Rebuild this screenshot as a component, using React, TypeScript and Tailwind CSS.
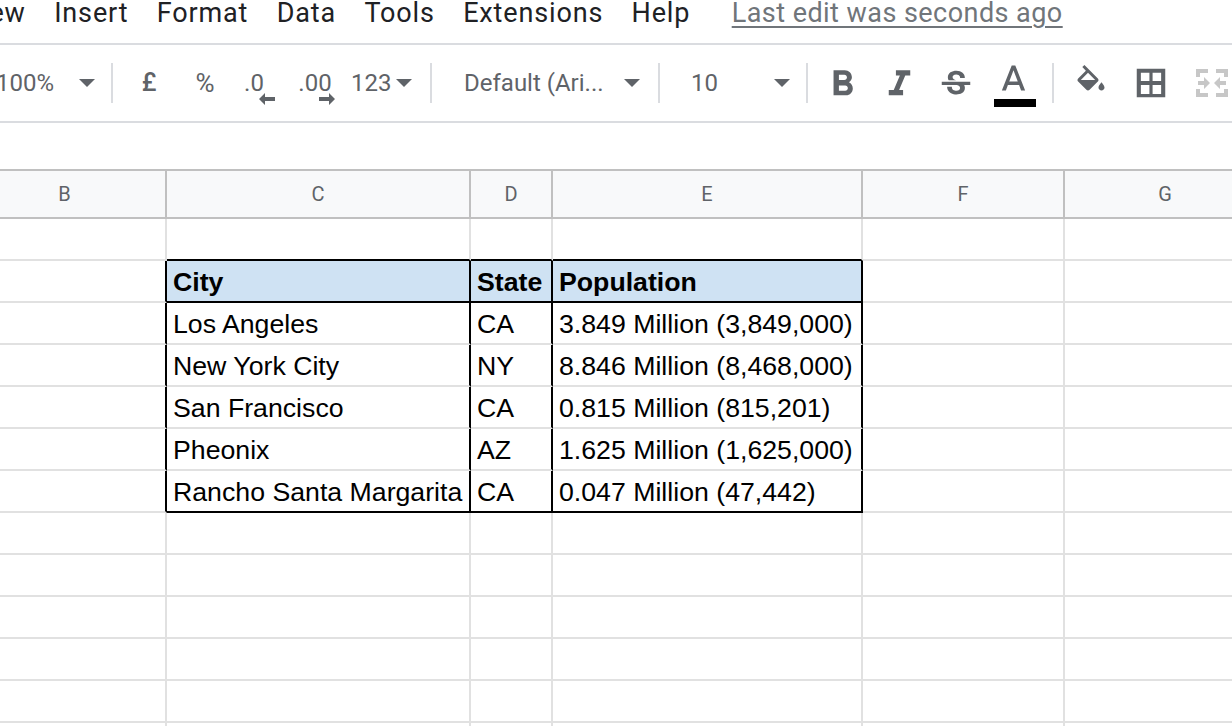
const menu = ["View", "Insert", "Format", "Data", "Tools", "Extensions", "Help"];

const columns = ["B", "C", "D", "E", "F", "G"];

const people = [
  ["City", "State", "Population"],
  ["Los Angeles", "CA", "3.849 Million (3,849,000)"],
  ["New York City", "NY", "8.846 Million (8,468,000)"],
  ["San Francisco", "CA", "0.815 Million (815,201)"],
  ["Pheonix", "AZ", "1.625 Million (1,625,000)"],
  ["Rancho Santa Margarita", "CA", "0.047 Million (47,442)"],
];

function Caret() {
  return (
    <svg width="16" height="8" viewBox="0 0 16 8" className="shrink-0 text-[#5f6368]">
      <path d="M0 0h16L8 8z" fill="currentColor" />
    </svg>
  );
}

function Divider() {
  return <div className="w-[2px] h-[40px] bg-[#dadce0] shrink-0" />;
}

function Icon({ d, size = 43 }: { d: string; size?: number }) {
  return (
    <svg width={size} height={size} viewBox="0 0 24 24" className="text-[#5f6368]">
      <path d={d} fill="currentColor" />
    </svg>
  );
}

function Cell({ width, right, bottom, bold, bg, children }: {
  width: string;
  right?: boolean;
  bottom?: boolean;
  bold?: boolean;
  bg?: boolean;
  children?: React.ReactNode;
}) {
  return (
    <div
      className={`${width} h-[42px] shrink-0 border-r-2 border-b-2 pl-[6px] pt-[2px] flex items-center whitespace-nowrap overflow-hidden text-[26.7px] text-black font-['Liberation_Sans',sans-serif] ${right ? "border-r-black" : "border-r-[#e1e1e1]"} ${bottom ? "border-b-black" : "border-b-[#e1e1e1]"} ${bold ? "font-bold" : ""} ${bg ? "bg-[#cfe2f3]" : ""}`}
    >
      {children}
    </div>
  );
}

function GridRow({ row }: { row: number }) {
  const data = row >= 1 && row <= 6 ? people[row - 1] : null;
  const bottom = row === 0 || row === 1 || row === 6;
  const inside = !!data;
  return (
    <div className="flex">
      <Cell width="w-[203px]" right={inside} />
      <Cell width="w-[304px]" right={inside} bottom={bottom} bold={row === 1} bg={row === 1}>{data?.[0]}</Cell>
      <Cell width="w-[82px]" right={inside} bottom={bottom} bold={row === 1} bg={row === 1}>{data?.[1]}</Cell>
      <Cell width="w-[310px]" right={inside} bottom={bottom} bold={row === 1} bg={row === 1}>{data?.[2]}</Cell>
      <Cell width="w-[202px]" />
      <Cell width="w-[202px]" />
    </div>
  );
}

export default function App() {
  return (
    <div className="w-[1232px] h-[726px] overflow-hidden bg-white font-['Roboto',sans-serif]">
      {/* menu bar */}
      <div className="h-[45px] border-b-2 border-[#dadce0] flex items-start gap-[28.4px] text-[27px] leading-[26px] tracking-[0.85px] text-[#202124] whitespace-nowrap -ml-[36px]">
        {menu.map((m) => (
          <span key={m} className="shrink-0">{m}</span>
        ))}
        <span className="shrink-0 ml-[13px] tracking-[0.45px] text-[#70757a] underline underline-offset-[4px]">Last edit was seconds ago</span>
      </div>

      {/* toolbar */}
      <div className="h-[78px] border-b-2 border-[#dadce0] flex items-center text-[#5f6368] text-[24px] whitespace-nowrap -ml-[4px]">
        <div className="w-[115px] flex items-center shrink-0">
          <span>100%</span>
          <span className="ml-[25px]"><Caret /></span>
        </div>
        <Divider />
        <div className="w-[8px] shrink-0" />
        <div className="w-[56px] shrink-0 text-center font-medium text-[25px]">£</div>
        <div className="w-[56px] shrink-0 text-center text-[26px]">%</div>
        <div className="w-[56px] shrink-0 text-center relative pr-[14px]">
          .0
          <svg width="16" height="12" viewBox="0 0 16 12" className="absolute left-[26px] top-[28px] text-[#5f6368]">
            <path d="M0 6l6-6v4h10v4H6v4z" fill="currentColor" />
          </svg>
        </div>
        <div className="w-[56px] shrink-0 text-center relative pr-[4px]">
          .00
          <svg width="16" height="12" viewBox="0 0 16 12" className="absolute left-[30px] top-[28px] text-[#5f6368]">
            <path d="M16 6l-6-6v4H0v4h10v4z" fill="currentColor" />
          </svg>
        </div>
        <div className="flex items-center shrink-0 ml-[6px] w-[79px]">
          <span>123</span>
          <span className="ml-[5px]"><Caret /></span>
        </div>
        <Divider />
        <div className="flex items-center w-[226px] shrink-0 pl-[32px]">
          <span className="w-[160px]">Default (Ari...</span>
          <Caret />
        </div>
        <Divider />
        <div className="flex items-center w-[146px] shrink-0 pl-[31px]">
          <span className="w-[83px]">10</span>
          <Caret />
        </div>
        <Divider />
        <div className="flex items-center w-[244px] shrink-0 pl-[6px]">
          <div className="w-[56px] shrink-0 flex justify-center pt-[3px]"><Icon d="M15.6 10.79c.97-.67 1.65-1.77 1.65-2.79 0-2.26-1.75-4-4-4H7v14h7.040c2.090 0 3.710-1.700 3.710-3.790 0-1.520-.860-2.820-2.150-3.420zM10 6.500h3c.830 0 1.500.670 1.500 1.500s-.670 1.500-1.500 1.500h-3v-3zm3.500 9H10v-3h3.500c.830 0 1.500.670 1.500 1.500s-.670 1.500-1.500 1.500z" /></div>
          <div className="w-[56px] shrink-0 ml-[1px] flex justify-center pt-[3px]"><Icon d="M10 4v3h2.210l-3.420 8H6v3h8v-3h-2.210l3.420-8H18V4z" /></div>
          <div className="w-[57px] shrink-0 flex justify-center pt-[3px]"><Icon d="M6.850 7.080C6.850 4.370 9.450 3 12.240 3c1.640 0 3 .490 3.900 1.280.770.650 1.460 1.730 1.460 3.240h-3.010c0-.310-.050-.590-.150-.850-.290-.860-1.200-1.280-2.250-1.280-1.860 0-2.340 1.020-2.340 1.700 0 .480.250.880.740 1.210.380.250.770.480 1.410.700H7.390c-.210-.340-.540-.890-.540-1.920zM21 12v-2H3v2h9.620c1.150.450 1.960.750 1.960 1.970 0 1-.810 1.670-2.280 1.670-1.540 0-2.930-.540-2.930-2.510H6.400c0 .550.080 1.130.240 1.580.810 2.290 3.290 3.300 5.670 3.300 2.270 0 5.300-.890 5.300-4.050 0-.300-.030-1.160-.450-1.960H21z" size={38} /></div>
          <div className="w-[56px] shrink-0 ml-[1px] flex justify-center relative -top-[2px]">
            <Icon d="M11 3L5.500 17h2.250l1.120-3h6.250l1.120 3h2.250L13 3h-2zm-1.380 9L12 5.670 14.380 12H9.620z" />
            <div className="absolute top-[39px] left-[9px] w-[42px] h-[8px] bg-black" />
          </div>
        </div>
        <Divider />
        <div className="flex items-center shrink-0 pl-[7px]">
          <div className="w-[60px] shrink-0 flex justify-center"><Icon d="M16.560 8.940L7.620 0 6.210 1.410l2.380 2.380-5.150 5.150c-.590.590-.590 1.540 0 2.120l5.500 5.500c.290.290.680.440 1.060.440s.770-.150 1.060-.440l5.500-5.500c.590-.580.590-1.530 0-2.120zM5.210 10L10 5.210 14.790 10H5.210zM19 11.500s-2 2.170-2 3.500c0 1.100.900 2 2 2s2-.900 2-2c0-1.330-2-3.500-2-3.500z" size={36} /></div>
          <div className="w-[60px] shrink-0 flex justify-center"><Icon d="M3 3v18h18V3H3zm8.000 16H5.600v-5.800h5.400v5.800zm0-8.200H5.600V5.600h5.400v5.200zm7.400 8.200h-5.400v-5.800h5.400v5.800zm0-8.200h-5.400V5.600h5.400v5.200z" size={38} /></div>
          <div className="w-[60px] shrink-0 ml-[1px] flex justify-center">
            <svg width="32" height="28" viewBox="0 0 32 28" className="text-[#c7c7c7]">
              <path d="M0 0h12v4H4v4H0zM20 0h12v8h-4V4h-8zM0 20h4v4h8v4H0zM28 20h4v8H20v-4h8zM2 12h6V8l6 6-6 6v-4H2zM30 12h-6V8l-6 6 6 6v-4h6z" fill="currentColor" />
            </svg>
          </div>
        </div>
      </div>

      {/* formula bar */}
      <div className="h-[46px]" />

      {/* column headers */}
      <div className="h-[50px] flex bg-[#f8f9fa] border-t-2 border-b-2 border-[#c0c0c0] -ml-[36px] text-[20px] text-[#5f6368]">
        {columns.map((c, i) => (
          <div
            key={c}
            className={`shrink-0 flex items-center justify-center border-r-2 border-[#c0c0c0] ${i === 1 ? "w-[304px]" : i === 2 ? "w-[82px]" : i === 3 ? "w-[310px]" : i === 0 ? "w-[203px]" : "w-[202px]"}`}
          >
            {c}
          </div>
        ))}
      </div>

      {/* cells */}
      <div className="-ml-[36px]">
        {[0, 1, 2, 3, 4, 5, 6, 7, 8, 9, 10, 11, 12].map((row) => (
          <GridRow key={row} row={row} />
        ))}
      </div>
    </div>
  );
}
